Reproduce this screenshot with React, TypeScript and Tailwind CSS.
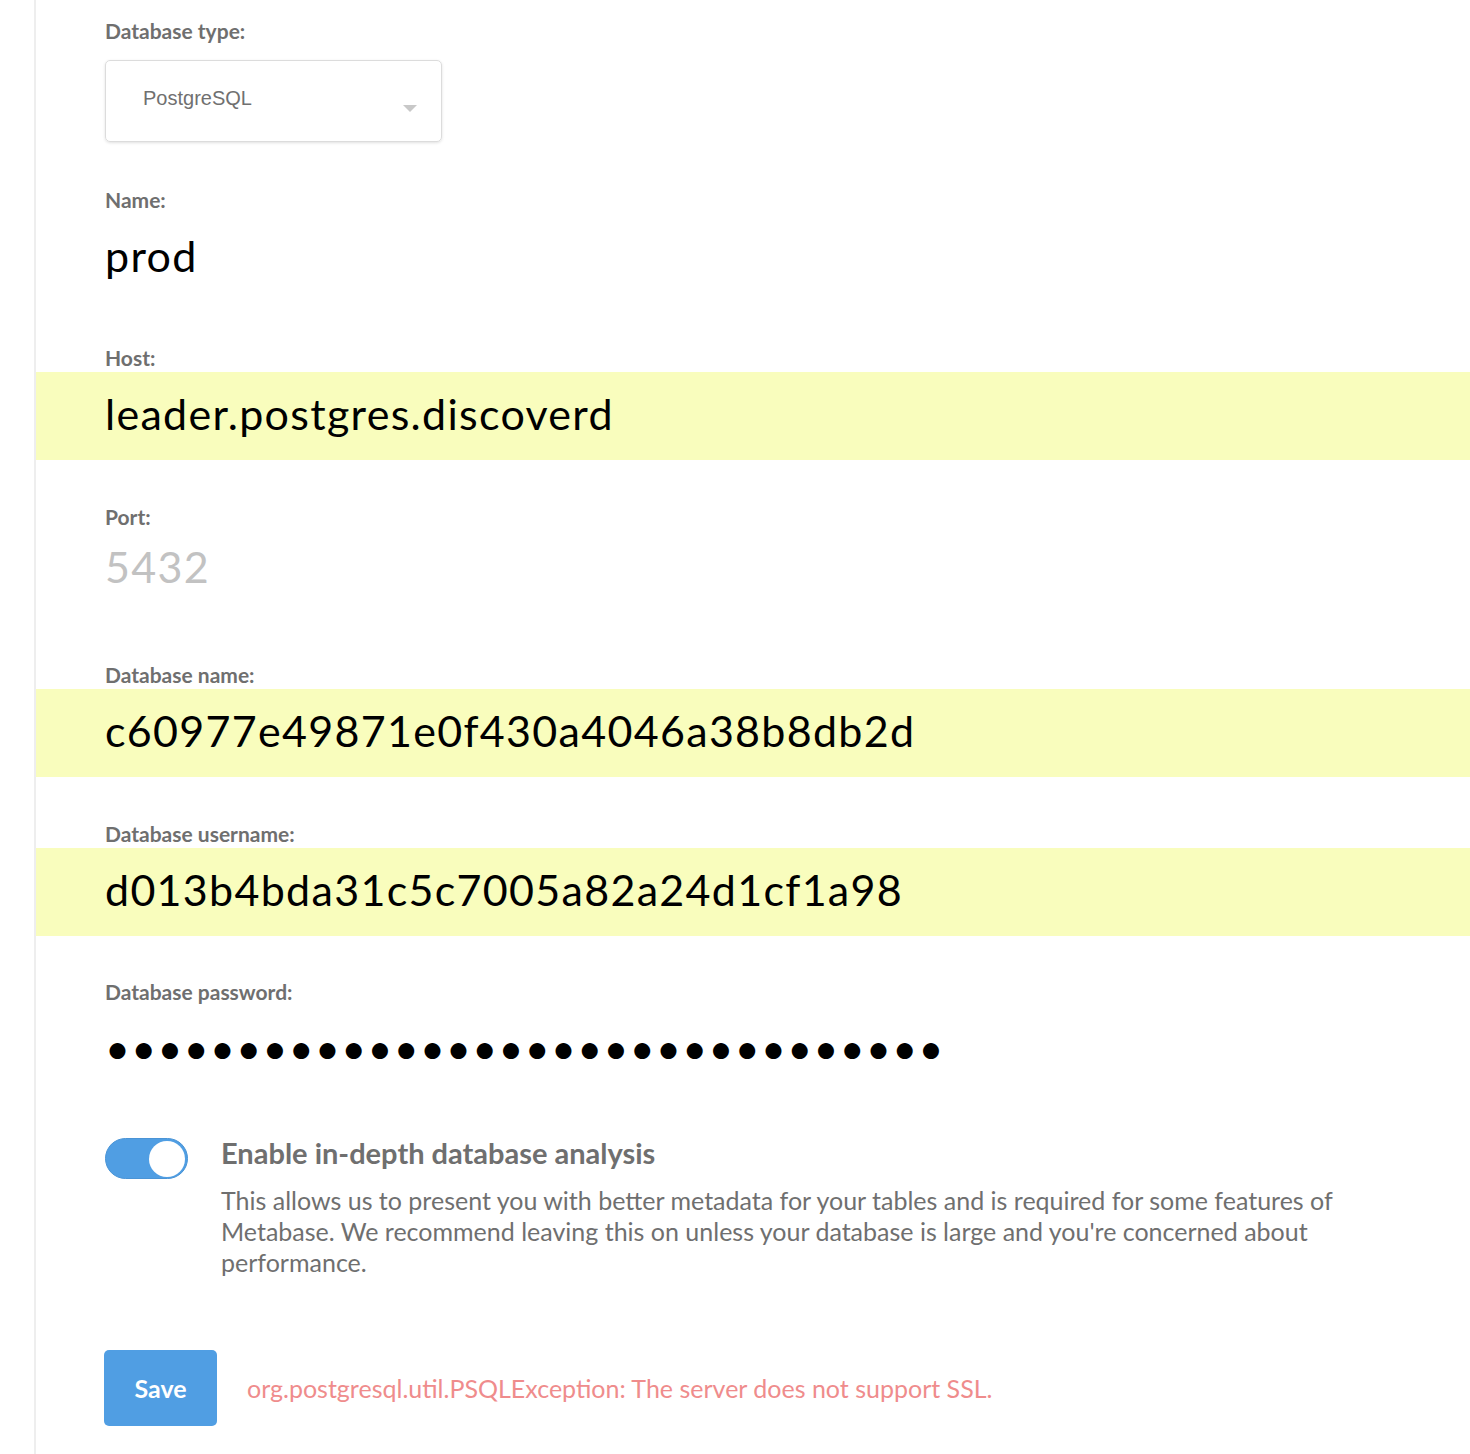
const labelCls = "block h-[24px] text-[21px] leading-[24px] font-bold text-[#6f6f6f] pl-[69px]";
const bandCls =
  "w-full pl-[69px] pb-[5px] bg-transparent text-[43px] tracking-[1.3px] text-black outline-none font-['Lato',sans-serif] placeholder:text-[#c2c2c2]";

function Field({
  label,
  value,
  highlight,
  placeholder,
  type = "text",
  short,
}: {
  label: string;
  value?: string;
  highlight?: boolean;
  placeholder?: string;
  type?: string;
  short?: boolean;
}) {
  return (
    <div className={short ? "mb-[56.4px]" : "mb-[44.4px]"}>
      <label className={labelCls + " mb-[2px]"}>{label}</label>
      <input
        type={type}
        readOnly
        value={value ?? ""}
        placeholder={placeholder}
        className={
          bandCls + (short ? " h-[76px]" : " h-[88px]") + (highlight ? " !bg-[#f9fdbd]" : "")
        }
      />
    </div>
  );
}

export default function App() {
  return (
    <div className="min-h-[1454px] bg-white flex font-['Lato',sans-serif]">
      <div className="w-[34px] shrink-0" />
      <div className="flex-1 border-l-2 border-[#eeeeee] pt-[19px]">
        <div className="mb-[46px]">
          <label className={labelCls + " mb-[17px]"}>Database type:</label>
          <div className="ml-[69px] w-[337px] h-[82px] rounded-[5px] border border-[#dcdcdc] shadow-[0_1px_3px_rgba(0,0,0,0.12)] flex items-center pl-[37px] pr-[24px] font-['Liberation_Sans',Arial,sans-serif] text-[20px] text-[#707070]">
            <span className="flex-1 -mt-[7px]">PostgreSQL</span>
            <svg width="14" height="8" viewBox="0 0 14 8" className="mt-[15px]">
              <path d="M0 0 L14 0 L7 7 Z" fill="#c8c8c8" />
            </svg>
          </div>
        </div>

        <Field label="Name:" value="prod" />
        <Field label="Host:" value="leader.postgres.discoverd" highlight />
        <Field label="Port:" placeholder="5432" short />
        <Field label="Database name:" value="c60977e49871e0f430a4046a38b8db2d" highlight />
        <Field label="Database username:" value="d013b4bda31c5c7005a82a24d1cf1a98" highlight />
        <Field label="Database password:" value="aaaaaaaaaaaaaaaaaaaaaaaaaaaaaaaa" type="password" />

        <div className="flex pl-[69px] gap-[33px]">
          <button
            type="button"
            className="shrink-0 w-[83px] h-[41px] rounded-full bg-[#509ee3] border border-[#4a94d6] flex items-center justify-end pr-[2px]"
          >
            <span className="w-[36px] h-[36px] rounded-full bg-white block" />
          </button>
          <div className="max-w-[1160px] -mt-[1px]">
            <div className="text-[29px] leading-[32px] font-bold text-[#6f6f6f]">
              Enable in-depth database analysis
            </div>
            <p className="mt-[16px] text-[25px] leading-[31px] text-[#6f6f6f]">
              This allows us to present you with better metadata for your tables and is required for some features of
              Metabase. We recommend leaving this on unless your database is large and you're concerned about
              performance.
            </p>
          </div>
        </div>

        <div className="flex items-center pl-[68px] mt-[72px] gap-[30px]">
          <button
            type="button"
            className="w-[113px] h-[76px] rounded-[5px] bg-[#509ee3] text-white text-[25px] font-bold"
          >
            Save
          </button>
          <span className="text-[25px] text-[#ef8c8c]">
            org.postgresql.util.PSQLException: The server does not support SSL.
          </span>
        </div>
      </div>
    </div>
  );
}
